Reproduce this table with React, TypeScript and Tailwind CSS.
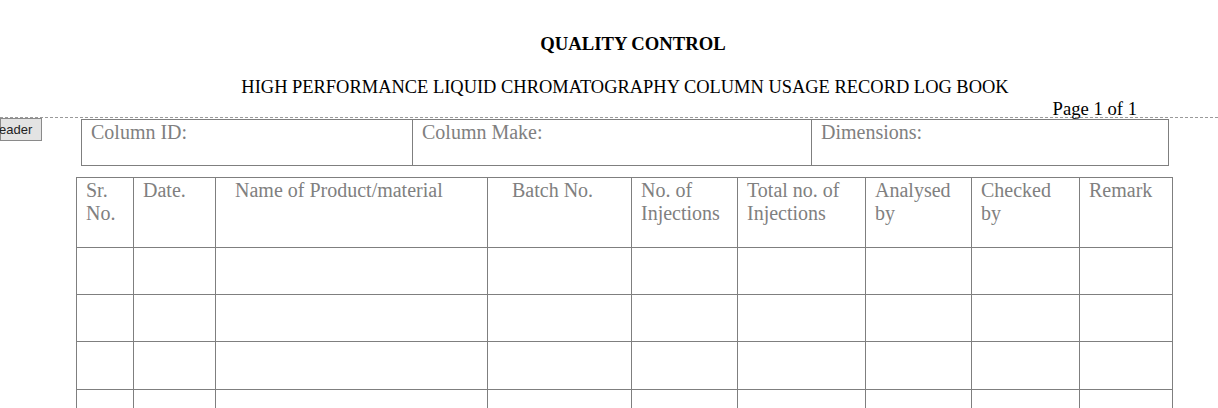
const headerCells = [
  { label: "Column ID:", w: "w-[331px]" },
  { label: "Column Make:", w: "w-[399px]" },
  { label: "Dimensions:", w: "w-[357px]" },
];

const columns = [
  { lines: ["Sr.", "No."], pl: "pl-[9px]" },
  { lines: ["Date."], pl: "pl-[9px]" },
  { lines: ["Name of Product/material"], pl: "pl-[19px]" },
  { lines: ["Batch No."], pl: "pl-[24px]" },
  { lines: ["No. of", "Injections"], pl: "pl-[9px]" },
  { lines: ["Total no. of", "Injections"], pl: "pl-[9px]" },
  { lines: ["Analysed", "by"], pl: "pl-[9px]" },
  { lines: ["Checked", "by"], pl: "pl-[9px]" },
  { lines: ["Remark"], pl: "pl-[9px]" },
];

const blankRows = [47, 47, 48, 47];

export default function App() {
  return (
    <div className="relative w-[1218px] h-[408px] overflow-hidden bg-white font-['Liberation_Serif',serif] text-[18.67px] leading-[23px]">
      {/* page heading */}
      <div className="pt-[32px] h-[56px] pl-[48px] text-center font-bold text-black">QUALITY CONTROL</div>
      <div className="mt-[20px] h-[21px] pl-[32px] text-center text-[18.45px] text-black">
        HIGH PERFORMANCE LIQUID CHROMATOGRAPHY COLUMN USAGE RECORD LOG BOOK
      </div>
      <div className="h-[20px] pr-[81px] text-right text-black">Page 1 of 1</div>

      {/* header boundary */}
      <div className="border-t border-dashed border-[#9a9a9a]" />
      <div className="relative text-[20px]">
        <div className="absolute left-0 top-[-1px] h-[23px] w-[42px] border border-[#8a8a8a] bg-[#e3e3e3] font-['Liberation_Sans',sans-serif] text-[13px] leading-[21px] text-[#222]">
          <span className="-ml-[2px]">eader</span>
        </div>

        <div className="ml-[81px] mt-[1px] flex w-fit border-l border-t border-[#7f7f7f] text-[#808080]">
          {headerCells.map((c) => (
            <div key={c.label} className={`${c.w} h-[46px] border-r border-b border-[#7f7f7f] pl-[9px] pt-[1px]`}>
              {c.label}
            </div>
          ))}
        </div>

        <div className="ml-[76px] mt-[11px] grid w-fit grid-cols-[57px_82px_272px_144px_106px_128px_106px_108px_93px] border-l border-t border-[#7f7f7f] text-[#808080]">
          {columns.map((c, i) => (
            <div key={i} className={`h-[70px] border-r border-b border-[#7f7f7f] pt-[1px] ${c.pl}`}>
              {c.lines.map((l) => (
                <div key={l}>{l}</div>
              ))}
            </div>
          ))}
          {blankRows.map((h, r) =>
            columns.map((_, i) => (
              <div
                key={`${r}-${i}`}
                className={`border-r border-b border-[#7f7f7f] ${h === 48 ? "h-[48px]" : "h-[47px]"}`}
              />
            ))
          )}
        </div>
      </div>
    </div>
  );
}
